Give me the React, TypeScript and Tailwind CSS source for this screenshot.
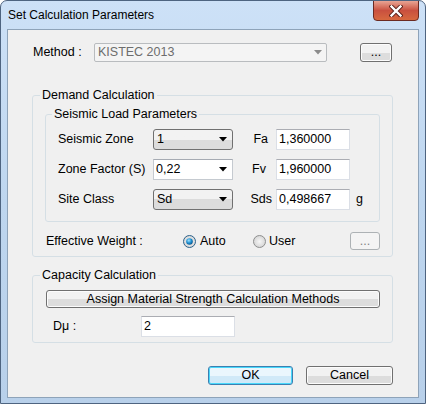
import React from 'react';

type ComboProps = {
  value: string;
  width: string;
  editable?: boolean;
  disabled?: boolean;
  height?: string;
};

function Arrow({ color = '#000' }: { color?: string }) {
  return (
    <svg width="8" height="5" viewBox="0 0 8 5" className="shrink-0">
      <polygon points="0,0 8,0 4,4.5" fill={color} />
    </svg>
  );
}

function Combo({ value, width, editable = false, disabled = false, height = 'h-[21px]' }: ComboProps) {
  if (disabled) {
    return (
      <div className={`${width} ${height} flex items-center justify-between border border-[#b9bcbf] rounded-[2px] bg-[#f4f4f4] pl-[3px] pr-[4px] text-[#6d6d6d]`}>
        <span>{value}</span>
        <Arrow color="#8c8c8c" />
      </div>
    );
  }
  if (editable) {
    return (
      <div className={`${width} ${height} flex items-center justify-between border border-[#c5cad0] border-t-[#a6abb3] bg-white pl-[2px] pr-[5px]`}>
        <span>{value}</span>
        <Arrow />
      </div>
    );
  }
  return (
    <div className={`${width} ${height} flex items-center justify-between border border-[#707070] rounded-[3px] bg-gradient-to-b from-[#f2f2f2] from-50% to-[#dcdcdc] to-50% pl-[3px] pr-[5px]`}>
      <span>{value}</span>
      <Arrow />
    </div>
  );
}

function TextBox({ value, width }: { value: string; width: string }) {
  return (
    <div className={`${width} h-[21px] flex items-center border border-[#dbdfe6] border-t-[#abadb3] bg-white pl-[2px]`}>
      {value}
    </div>
  );
}

function WinButton({ label, className, focused = false, disabled = false }: { label: string; className: string; focused?: boolean; disabled?: boolean }) {
  if (disabled) {
    return (
      <div className={`${className} flex items-center justify-center border border-[#adb2b5] rounded-[3px] bg-[#f4f4f4] text-[#838383]`}>
        {label}
      </div>
    );
  }
  return (
    <div
      className={`${className} flex items-center justify-center rounded-[3px] border ${
        focused
          ? 'border-[#3c7fb1] bg-gradient-to-b from-[#eaf6fd] from-50% to-[#d0e9f8] to-50% shadow-[inset_0_0_0_1px_#48d8fb]'
          : 'border-[#707070] bg-gradient-to-b from-[#f2f2f2] from-50% to-[#dddddd] to-50% shadow-[inset_0_0_0_1px_#fcfcfc]'
      }`}
    >
      {label}
    </div>
  );
}

function Radio({ checked }: { checked: boolean }) {
  return (
    <svg width="13" height="13" viewBox="0 0 13 13" className="shrink-0">
      <defs>
        <radialGradient id="rin" cx="50%" cy="50%" r="60%">
          <stop offset="0%" stopColor="#f6f6f6" />
          <stop offset="100%" stopColor="#cfcfcf" />
        </radialGradient>
        <radialGradient id="dot" cx="40%" cy="35%" r="70%">
          <stop offset="0%" stopColor="#9fe2ff" />
          <stop offset="55%" stopColor="#1c8ed0" />
          <stop offset="100%" stopColor="#0c4f85" />
        </radialGradient>
      </defs>
      <circle cx="6.5" cy="6.5" r="6" fill="url(#rin)" stroke={checked ? '#2c628b' : '#8e8f8f'} strokeWidth="1" />
      {checked && <circle cx="6.5" cy="6.5" r="3.3" fill="url(#dot)" />}
    </svg>
  );
}

function CloseGlyph() {
  return (
    <svg width="14" height="12" viewBox="0 0 14 12">
      <path d="M2.5 1.5 L11.5 10.5 M11.5 1.5 L2.5 10.5" stroke="#5a2019" strokeWidth="4.2" strokeLinecap="square" />
      <path d="M2.5 1.5 L11.5 10.5 M11.5 1.5 L2.5 10.5" stroke="#ffffff" strokeWidth="2.4" strokeLinecap="square" />
    </svg>
  );
}

export default function App() {
  return (
    <div className="w-[426px] h-[404px] flex flex-col border border-[#4e6480] rounded-t-[7px] bg-gradient-to-b from-[#cde1f7] via-[#bed6ef] to-[#b8d0ea] overflow-hidden font-['Liberation_Sans',Arial,sans-serif] text-[12.5px] text-black">
      <div className="relative h-[28px] shrink-0 flex items-center pl-[7px]">
        <span className="text-[12px] text-black">Set Calculation Parameters</span>
        <div className="absolute right-[6px] top-[-1px] w-[46px] h-[21px] flex items-center justify-center border border-[#6b2a22] rounded-b-[4px] bg-gradient-to-b from-[#e8a494] from-0% via-[#c9503f] via-50% to-[#d7683f]">
          <CloseGlyph />
        </div>
      </div>

      <div className="flex-1 mx-[6px] mb-[5px] border border-[#8ea3b9] bg-[#f0f0f0] flex flex-col pt-[12px]">
        {/* method row */}
        <div className="flex items-center h-[20px] pl-[25px]">
          <span className="w-[61px]">Method :</span>
          <Combo value="KISTEC 2013" width="w-[233px]" height="h-[19px]" disabled />
          <WinButton label="..." className="ml-[33px] w-[32px] h-[19px]" />
        </div>

        {/* demand */}
        <fieldset className="mt-[26px] ml-[24px] w-[361px] border border-[#d5dfe5] rounded-[3px] pb-[6px]">
          <legend className="ml-[7px] px-[2px] leading-[14px]">Demand Calculation</legend>
          <fieldset className="mt-[5px] ml-[12px] w-[335px] border border-[#d5dfe5] rounded-[3px] pb-[11px]">
            <legend className="ml-[6px] px-[2px] leading-[14px]">Seismic Load Parameters</legend>
            <div className="mt-[7px] pl-[12px] flex flex-col gap-[8px]">
              <div className="flex items-center h-[22px]">
                <span className="w-[95px]">Seismic Zone</span>
                <Combo value="1" width="w-[80px]" />
                <span className="w-[43px] text-right pr-[8px]">Fa</span>
                <TextBox value="1,360000" width="w-[74px]" />
              </div>
              <div className="flex items-center h-[22px]">
                <span className="w-[95px]">Zone Factor (S)</span>
                <Combo value="0,22" width="w-[80px]" editable />
                <span className="w-[43px] text-right pr-[10px]">Fv</span>
                <TextBox value="1,960000" width="w-[74px]" />
              </div>
              <div className="flex items-center h-[22px]">
                <span className="w-[95px]">Site Class</span>
                <Combo value="Sd" width="w-[80px]" />
                <span className="w-[43px] text-right pr-[4px]">Sds</span>
                <TextBox value="0,498667" width="w-[74px]" />
                <span className="ml-[6px]">g</span>
              </div>
            </div>
          </fieldset>
          <div className="mt-[10px] h-[18px] flex items-center pl-[13px]">
            <span className="w-[137px]">Effective Weight :</span>
            <div className="w-[70px] flex items-center gap-[4px]">
              <Radio checked />
              <span>Auto</span>
            </div>
            <div className="w-[97px] flex items-center gap-[3px]">
              <Radio checked={false} />
              <span>User</span>
            </div>
            <WinButton label="..." className="w-[30px] h-[18px]" disabled />
          </div>
        </fieldset>

        {/* capacity */}
        <fieldset className="mt-[11px] ml-[24px] w-[361px] border border-[#d5dfe5] rounded-[3px] pb-[5px]">
          <legend className="ml-[7px] px-[2px] leading-[14px]">Capacity Calculation</legend>
          <WinButton label="Assign Material Strength Calculation Methods" className="mt-[8px] ml-[13px] w-[334px] h-[18px]" />
          <div className="mt-[8px] h-[21px] flex items-center pl-[20px]">
            <span className="w-[88px]">Dμ :</span>
            <TextBox value="2" width="w-[94px]" />
          </div>
        </fieldset>

        {/* buttons */}
        <div className="mt-[23px] flex justify-end gap-[13px] pr-[25px]">
          <WinButton label="OK" className="w-[85px] h-[19px]" focused />
          <WinButton label="Cancel" className="w-[87px] h-[19px]" />
        </div>
      </div>
    </div>
  );
}
